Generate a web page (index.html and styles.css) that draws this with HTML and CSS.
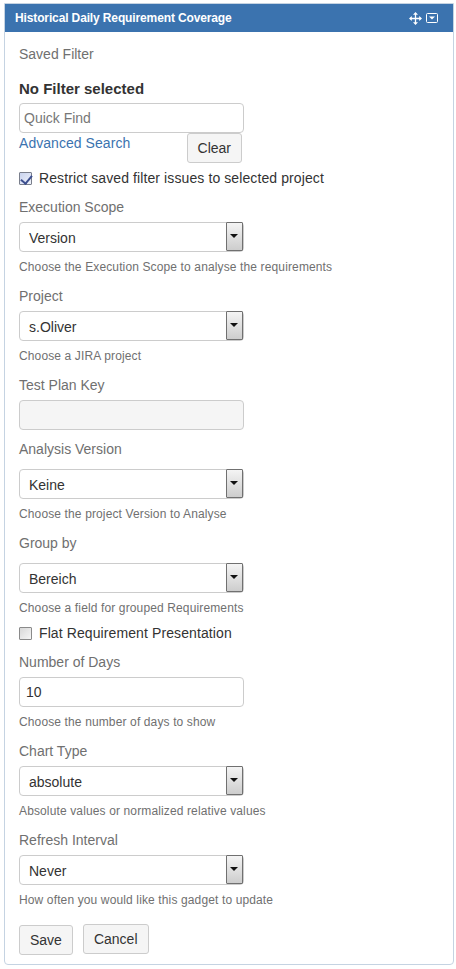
FILE: index.html
```html
<!DOCTYPE html>
<html lang="en">
<head>
<meta charset="utf-8">
<title>Historical Daily Requirement Coverage</title>
<link rel="stylesheet" href="styles.css">
</head>
<body>
<div class="gadget">
  <header class="gadget-head">
    <h1 class="gadget-title">Historical Daily Requirement Coverage</h1>
    <svg class="icon-move" width="13" height="13" viewBox="0 0 13 13" aria-hidden="true">
      <path d="M6.5 1.5V11.5M1.5 6.5H11.5" stroke="#fff" stroke-width="1.3" fill="none"/>
      <path d="M6.5 0L9 2.8H4ZM6.5 13L4 10.2H9ZM0 6.5L2.8 4V9ZM13 6.5L10.2 9V4Z" fill="#fff"/>
    </svg>
    <svg class="icon-menu" width="12" height="10" viewBox="0 0 12 10" aria-hidden="true">
      <rect x="0.5" y="0.5" width="11" height="9" rx="1" fill="none" stroke="#fff"/>
      <path d="M3 3.5H9L6 6.5Z" fill="#fff"/>
    </svg>
  </header>
  <form class="gadget-body">
    <div class="label first">Saved Filter</div>
    <div class="filter-name">No Filter selected</div>
    <input class="field" type="text" placeholder="Quick Find">
    <div class="find-row">
      <a class="link" href="#">Advanced Search</a>
      <button class="btn btn-clear" type="button">Clear</button>
    </div>
    <label class="check check-restrict"><input type="checkbox" checked><span>Restrict saved filter issues to selected project</span></label>

    <div class="label">Execution Scope</div>
    <div class="select"><select><option>Version</option></select><span class="arrow"></span></div>
    <div class="help">Choose the Execution Scope to analyse the requirements</div>

    <div class="label">Project</div>
    <div class="select"><select><option>s.Oliver</option></select><span class="arrow"></span></div>
    <div class="help">Choose a JIRA project</div>

    <div class="label">Test Plan Key</div>
    <input class="field field-disabled" type="text" disabled>

    <div class="label label-tall">Analysis Version</div>
    <div class="select"><select><option>Keine</option></select><span class="arrow"></span></div>
    <div class="help">Choose the project Version to Analyse</div>

    <div class="label label-tall">Group by</div>
    <div class="select"><select><option>Bereich</option></select><span class="arrow"></span></div>
    <div class="help">Choose a field for grouped Requirements</div>
    <label class="check check-flat"><input type="checkbox"><span>Flat Requirement Presentation</span></label>

    <div class="label">Number of Days</div>
    <input class="field field-value" type="text" value="10">
    <div class="help">Choose the number of days to show</div>

    <div class="label">Chart Type</div>
    <div class="select"><select><option>absolute</option></select><span class="arrow"></span></div>
    <div class="help">Absolute values or normalized relative values</div>

    <div class="label">Refresh Interval</div>
    <div class="select"><select><option>Never</option></select><span class="arrow"></span></div>
    <div class="help">How often you would like this gadget to update</div>

    <div class="actions">
      <button class="btn btn-save" type="button">Save</button>
      <button class="btn" type="button">Cancel</button>
    </div>
  </form>
</div>
</body>
</html>
```
FILE: styles.css
```css
* { box-sizing: border-box; }
html, body { margin: 0; padding: 0; background: #fff; }
body {
  padding: 3px 2px 0 4px;
  font-family: "Liberation Sans", Arial, sans-serif;
  font-size: 14px;
  line-height: 20px;
  color: #333;
}
.gadget {
  width: 450px;
  height: 962px;
  border: 1px solid #c5d3e2;
  border-radius: 0 0 4px 4px;
}
.gadget-head {
  height: 28px;
  background: #3b73af;
  display: flex;
  align-items: center;
  padding: 0 15px 0 10px;
}
.gadget-title {
  margin: 0;
  flex: 1;
  font-size: 12px;
  font-weight: bold;
  line-height: 16px;
  letter-spacing: -0.13px;
  color: #fff;
}
.icon-move { margin-right: 4px; }
.gadget-body { padding: 12px 0 0 14px; }
.label { height: 20px; margin-top: 10px; color: #707070; }
.label.first { margin-top: 0; }
.check + .label { margin-top: 9px; }
.field + .label { margin-top: 9px; }
.label-tall { height: 25px; }
.field + .label-tall { margin-top: 9px; }
.filter-name { margin-top: 15px; height: 20px; font-size: 15px; font-weight: bold; color: #333; }
.field {
  display: block;
  width: 225px;
  height: 30px;
  margin: 4px 0 0;
  padding: 0 4px;
  border: 1px solid #ccc;
  border-radius: 4px;
  background: #fff;
  font: 14px "Liberation Sans", Arial, sans-serif;
  color: #333;
}
.field::placeholder { color: #777; opacity: 1; }
.label + .field { margin-top: 5px; }
.field-value { padding-left: 6px; }
.field-disabled { background: #f5f5f5; }
.find-row { display: flex; justify-content: space-between; width: 223px; height: 30px; }
.link { color: #3b73af; text-decoration: none; line-height: 20px; letter-spacing: 0.05px; }
.btn {
  height: 30px;
  padding: 0 10px;
  border: 1px solid #ccc;
  border-radius: 3px;
  background: #f5f5f5;
  font: 14px "Liberation Sans", Arial, sans-serif;
  color: #333;
}
.btn-save { margin-top: 1px; }
.check { display: flex; align-items: center; height: 20px; letter-spacing: 0.1px; color: #333; }
.check input {
  appearance: none;
  position: relative;
  width: 13px;
  height: 13px;
  margin: 0 7px 0 0;
  border: 1px solid #8a8a8a;
  border-radius: 1px;
  background: linear-gradient(135deg, #d8d8d8, #f6f6f6);
}
.check input:checked { background: linear-gradient(135deg, #c9d3ee, #f0f3fb); border-color: #7a7f8c; }
.check input:checked::after {
  content: "";
  position: absolute;
  left: 3px;
  top: 0;
  width: 5px;
  height: 9px;
  border: solid #3d4f8f;
  border-width: 0 2px 2px 0;
  transform: rotate(40deg);
}
.check-restrict { margin-top: 5px; }
.check-flat { margin-top: 6px; }
.select { position: relative; width: 225px; height: 30px; margin-top: 5px; }
.select select {
  appearance: none;
  display: block;
  width: 100%;
  height: 100%;
  padding: 2px 0 0 9px;
  border: 1px solid #ccc;
  border-radius: 4px;
  background: #fff;
  font: 14px "Liberation Sans", Arial, sans-serif;
  color: #333;
}
.select .arrow {
  position: absolute;
  top: 0;
  right: 1px;
  width: 17px;
  height: 29px;
  border: 1px solid #707070;
  border-radius: 1px;
  background: linear-gradient(#f4f4f4, #cdcdcd);
  pointer-events: none;
}
.select .arrow::after {
  content: "";
  position: absolute;
  top: 11px;
  left: 3px;
  border-style: solid;
  border-width: 4px 4px 0;
  border-color: #111 transparent transparent;
}
.help { height: 18px; margin-top: 6px; font-size: 12px; line-height: 18px; letter-spacing: 0.13px; color: #707070; }
.actions { display: flex; gap: 10px; align-items: flex-start; margin-top: 15px; }
```
